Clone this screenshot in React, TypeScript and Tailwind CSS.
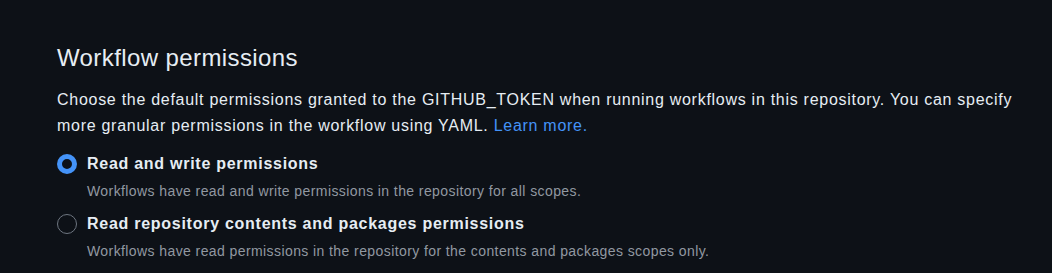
import React, { useState } from 'react';

const options = [
  {
    id: 'write',
    label: 'Read and write permissions',
    hint: 'Workflows have read and write permissions in the repository for all scopes.',
  },
  {
    id: 'read',
    label: 'Read repository contents and packages permissions',
    hint: 'Workflows have read permissions in the repository for the contents and packages scopes only.',
  },
];

export default function App() {
  const [selected, setSelected] = useState('write');

  return (
    <div
      className="h-[273px] w-full bg-[#0d1117] pl-[57px] pt-[42px] text-[#e6edf3]"
      style={{ fontFamily: '"Liberation Sans", Arial, sans-serif' }}
    >
      <h2 className="text-[24px] leading-[32px] font-normal tracking-[0.4px] text-[#e6edf3]">Workflow permissions</h2>
      <p className="mt-[13px] max-w-[975px] text-[16px] leading-[26px] tracking-[0.72px]">
        Choose the default permissions granted to the GITHUB_TOKEN when running workflows in this repository. You can specify
        more granular permissions in the workflow using YAML.{' '}
        <a href="#" className="text-[#4493f8]">Learn more.</a>
      </p>

      <div className="mt-[13px] flex flex-col gap-[11px]">
        {options.map((o) => {
          const on = selected === o.id;
          return (
            <label key={o.id} className="flex cursor-pointer items-start gap-[10px]" onClick={() => setSelected(o.id)}>
              <span
                className={
                  on
                    ? 'mt-[2px] size-[20px] shrink-0 rounded-full border-[5px] border-[#4493f8] bg-[#0d1117]'
                    : 'mt-[2px] size-[20px] shrink-0 rounded-full border border-[#6e7681] bg-[#0d1117]'
                }
              />
              <span className="flex flex-col">
                <span className="text-[16px] leading-[24px] font-bold tracking-[0.73px]">{o.label}</span>
                <span className="mt-[5px] text-[14px] leading-[20px] tracking-[0.41px] text-[#9198a1]">{o.hint}</span>
              </span>
            </label>
          );
        })}
      </div>
    </div>
  );
}
